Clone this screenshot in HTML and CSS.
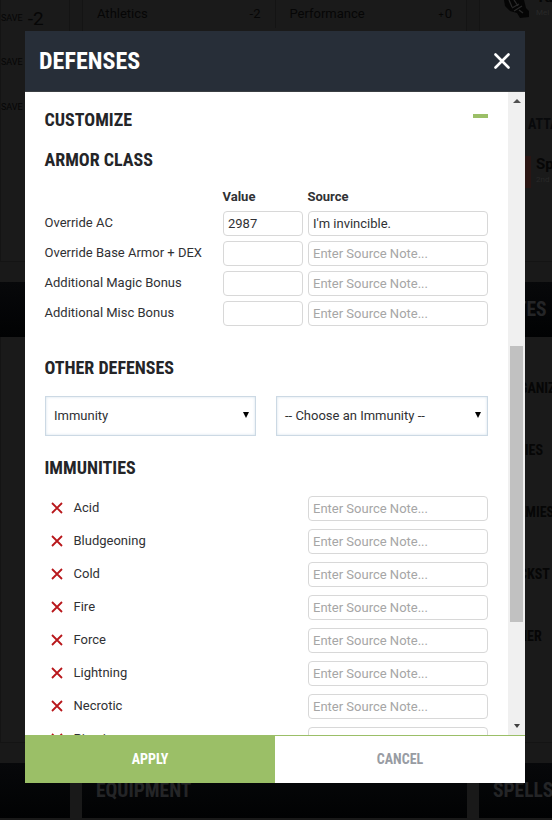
FILE: index.html
```html
<!DOCTYPE html>
<html lang="en">
<head>
<meta charset="utf-8">
<title>Defenses</title>
<link rel="stylesheet" href="styles.css">
</head>
<body>
<div class="sheet">
  <div class="col col-saves">
    <section class="panel saves">
      <div class="save"><small>SAVE</small><b>-2</b></div>
      <div class="save"><small>SAVE</small></div>
      <div class="save"><small>SAVE</small></div>
    </section>
    <div class="band"></div>
    <section class="panel lower"></section>
    <div class="band bottom"></div>
  </div>
  <div class="col col-skills">
    <section class="panel skills">
      <div class="skill"><span>Athletics</span><span>-2</span></div>
      <div class="skill"><span>Performance</span><span class="mod"><small>+</small>0</span></div>
    </section>
    <div class="band"></div>
    <section class="panel lower"></section>
    <div class="band bottom"><span class="cond">EQUIPMENT</span></div>
  </div>
  <div class="col col-actions">
    <section class="panel actions">
      <div class="attack">
        <svg width="28" height="19" viewBox="0 0 28 19"><path d="M2 0h20l2 8 3 3v6l-9 1-3-5-7-2-5-5z" fill="#050505"/><path d="M7 0l3 7M12 0l4 6M10 8l7-4M12 11l8-5M17 10l4 3" stroke="#292929" stroke-width="1.3" fill="none"/></svg>
        <div class="attack-text"><b>Ya</b><small>Mel</small></div>
      </div>
      <div class="attack-title cond">ATTA</div>
      <div class="spell"><i></i><div class="attack-text"><b>Sp</b><small>2nd</small></div></div>
    </section>
    <div class="band"><span class="cond">NOTES</span></div>
    <section class="panel lower notes">
      <div><span class="cond">ORGANIZ</span></div>
      <div><span class="cond">ALLIES</span></div>
      <div><span class="cond">ENEMIES</span></div>
      <div><span class="cond">BACKST</span></div>
      <div><span class="cond">OTHER</span></div>
    </section>
    <div class="band bottom"><span class="cond">SPELLS</span></div>
  </div>
</div>

<div class="modal">
  <header class="modal-head">
    <h1 class="cond">DEFENSES</h1>
    <svg class="close" width="18" height="18" viewBox="0 0 18 18"><path d="M2.5 2.5l13 13M15.5 2.5l-13 13" stroke="#fff" stroke-width="2.6" stroke-linecap="round"/></svg>
  </header>
  <div class="modal-body">
    <main class="content">
      <div class="customize"><h2 class="cond">CUSTOMIZE</h2><i class="minus"></i></div>
      <h2 class="cond">ARMOR CLASS</h2>
      <div class="ac">
        <span></span><b>Value</b><b>Source</b>
        <label>Override AC</label><input value="2987"><input value="I'm invincible.">
        <label>Override Base Armor + DEX</label><input><input placeholder="Enter Source Note...">
        <label>Additional Magic Bonus</label><input><input placeholder="Enter Source Note...">
        <label>Additional Misc Bonus</label><input><input placeholder="Enter Source Note...">
      </div>
      <h2 class="cond">OTHER DEFENSES</h2>
      <div class="selects">
        <div class="select"><span>Immunity</span><i class="caret"></i></div>
        <div class="select"><span>-- Choose an Immunity --</span><i class="caret"></i></div>
      </div>
      <h2 class="cond">IMMUNITIES</h2>
      <div class="immunities">
        <div class="row"><svg class="x" viewBox="0 0 12 12"><path d="M1 1l10 10M11 1L1 11"/></svg><span>Acid</span><input placeholder="Enter Source Note..."></div>
        <div class="row"><svg class="x" viewBox="0 0 12 12"><path d="M1 1l10 10M11 1L1 11"/></svg><span>Bludgeoning</span><input placeholder="Enter Source Note..."></div>
        <div class="row"><svg class="x" viewBox="0 0 12 12"><path d="M1 1l10 10M11 1L1 11"/></svg><span>Cold</span><input placeholder="Enter Source Note..."></div>
        <div class="row"><svg class="x" viewBox="0 0 12 12"><path d="M1 1l10 10M11 1L1 11"/></svg><span>Fire</span><input placeholder="Enter Source Note..."></div>
        <div class="row"><svg class="x" viewBox="0 0 12 12"><path d="M1 1l10 10M11 1L1 11"/></svg><span>Force</span><input placeholder="Enter Source Note..."></div>
        <div class="row"><svg class="x" viewBox="0 0 12 12"><path d="M1 1l10 10M11 1L1 11"/></svg><span>Lightning</span><input placeholder="Enter Source Note..."></div>
        <div class="row"><svg class="x" viewBox="0 0 12 12"><path d="M1 1l10 10M11 1L1 11"/></svg><span>Necrotic</span><input placeholder="Enter Source Note..."></div>
        <div class="row"><svg class="x" viewBox="0 0 12 12"><path d="M1 1l10 10M11 1L1 11"/></svg><span>Piercing</span><input placeholder="Enter Source Note..."></div>
      </div>
    </main>
    <div class="scrollbar"><i class="up"></i><i class="thumb"></i><i class="down"></i></div>
  </div>
  <footer class="modal-foot"><div class="apply"><span class="cond">APPLY</span></div><div class="cancel"><span class="cond">CANCEL</span></div></footer>
</div>
</body>
</html>
```
FILE: styles.css
```css
* { box-sizing: border-box; }
html, body { margin: 0; height: 820px; overflow: hidden; }
body { position: relative; background: #191919; font-family: Roboto, sans-serif; font-size: 13px; color: #303134; }
h1, h2 { margin: 0; color: #242528; }
.cond { font-family: "Roboto Condensed", Roboto, sans-serif; font-stretch: 75%; font-weight: 700; white-space: nowrap; }

.sheet { display: flex; gap: 12px; width: 552px; height: 820px; overflow: hidden; color: #060606; }
.col { flex: none; display: flex; flex-direction: column; }
.col-saves { width: 70px; }
.col-skills { width: 385px; }
.col-actions { width: 100px; }
.panel { flex: none; height: 262px; border: 1px solid #141414; border-top: 0; background: #1a1a1a; overflow: hidden; }
.panel.lower { height: 406px; }
.band { flex: none; height: 55px; margin-top: 20px; padding: 16px 14px; background: linear-gradient(#07080a, #010203); color: #242527; font-size: 19.5px; line-height: 24px; overflow: hidden; }
.save { display: flex; align-items: center; gap: 5px; height: 45px; }
.save:first-child { height: 38px; padding-bottom: 2px; }
.save small { font-size: 9px; }
.save b { font-size: 19px; font-weight: 400; }
.save + .save { padding-top: 3px; }
.skills { display: flex; }
.skill { width: 50%; height: 28px; display: flex; justify-content: space-between; padding: 5px 14px; line-height: 18px; }
.skill + .skill { border-left: 1px solid #141414; }
.mod small { font-size: 9px; margin-right: 1px; }
.actions { padding-left: 22px; }
.attack { display: flex; gap: 6px; height: 112px; }
.attack svg { flex: none; }
.attack-text { display: flex; flex-direction: column; line-height: 16px; }
.attack-text b { font-size: 15px; }
.attack-text small { font-size: 8px; color: #292929; }
.attack .attack-text { margin-top: -11px; }
.attack-title { padding-left: 26px; line-height: 24px; font-size: 14px; color: #08090b; }
.spell { display: flex; gap: 5px; margin-top: 20px; }
.spell i { width: 29px; height: 32px; background: #2b1513; }
.notes div { display: flex; align-items: center; height: 62px; padding-left: 23px; font-size: 14px; }
.notes div:first-child { height: 82px; padding-top: 20px; }

.modal { position: absolute; left: 25px; top: 31px; width: 500px; height: 752px; display: flex; flex-direction: column; background: #fff; }
.modal-head { height: 61px; flex: none; display: flex; align-items: center; justify-content: space-between; padding: 0 14px; background: #272e38; border-bottom: 1px solid #3a3e42; }
h1 { color: #fff; font-size: 24px; letter-spacing: .05px; }
.modal-body { height: 643px; display: flex; overflow: hidden; }
.content { width: 483px; height: 643px; padding: 17px 20px 0; overflow: hidden; }
h2 { font-size: 18px; line-height: 22px; margin-left: -.5px; }
.customize { display: flex; justify-content: space-between; margin-bottom: 18px; }
.minus { width: 15px; height: 4px; margin-top: 5px; background: #9bbf67; }
.ac { display: grid; grid-template-columns: 173px 80px 180px; column-gap: 5px; row-gap: 5px; grid-template-rows: 19px repeat(4, 25px); margin: 16px 0 31px; }
.ac b { font-size: 13px; line-height: 20px; margin-left: -.5px; }
.ac label { line-height: 24px; margin-left: -.5px; white-space: nowrap; }
input { width: 100%; height: 25px; padding: 0 4px 1px; border: 1px solid #d8d8d8; border-radius: 4px; font: 13px Roboto, sans-serif; color: #303134; background: #fff; }
input::placeholder { color: #a6a6a6; opacity: 1; }
.selects { display: grid; grid-template-columns: 211px 212px; column-gap: 20px; margin: 17px 0 21px; }
.select { height: 40px; display: flex; justify-content: space-between; align-items: center; padding: 0 6px 2px 8px; border: 1px solid #ccd9e4; box-shadow: inset 0 0 3px #d3e1ec; }
.caret { border: 3px solid transparent; border-top: 6px solid #000; border-bottom: 0; }
.immunities { display: flex; flex-direction: column; gap: 8px; margin-top: 17px; }
.row { display: grid; grid-template-columns: 12px 245px 180px; padding-left: 6px; height: 25px; align-items: center; }
.row span { padding: 0 0 2px 10.5px; line-height: 23px; }
.x { width: 12px; height: 12px; margin-top: -2px; stroke: #b8171b; stroke-width: 1.8; fill: none; }
.scrollbar { width: 17px; height: 643px; background: #f0f0f0; display: flex; flex-direction: column; align-items: center; }
.up { border: 4px solid transparent; border-bottom: 4px solid #505050; border-top: 0; margin-top: 7px; }
.thumb { width: 13px; height: 276px; margin-top: 243px; background: #c1c1c1; }
.down { border: 3px solid transparent; border-top: 4px solid #404040; border-bottom: 0; margin-top: 102px; }
.modal-foot { flex: none; height: 48px; display: flex; border-top: 1px solid #9bbf67; font-size: 14px; }
.modal-foot div { width: 250px; display: flex; align-items: center; justify-content: center; padding-bottom: 1px; }
.apply { background: #9bbf67; color: #fff; }
.cancel { color: #989ca3; }
```
